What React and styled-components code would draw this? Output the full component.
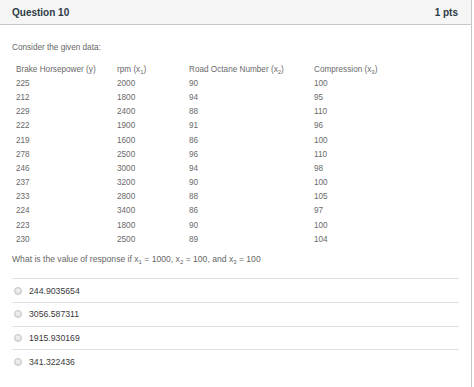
import styled, { createGlobalStyle } from "styled-components";

const GlobalStyle = createGlobalStyle`
  html, body {
    margin: 0;
    padding: 0;
    background: #fff;
  }
  body {
    font-family: "Liberation Sans", Arial, sans-serif;
  }
`;

const Card = styled.div`
  width: 472px;
  height: 387px;
  box-sizing: border-box;
  border-right: 1px solid #c6c6c6;
  display: flex;
  flex-direction: column;
`;

const Header = styled.div`
  height: 24px;
  display: flex;
  align-items: center;
  justify-content: space-between;
  padding: 0 13px 0 12px;
  background: #f5f5f5;
  border-bottom: 1px solid #c8c8c8;
  color: #2d3b45;
  font-size: 10px;
  font-weight: bold;
`;

const Body = styled.div`
  padding: 17px 12px 0 12px;
  color: #666;
  font-size: 8.2px;
`;

const Line = styled.div`
  line-height: 12px;
  height: 12px;
  white-space: nowrap;
`;

const DataTable = styled.div`
  margin-top: 8px;
  padding-left: 4px;
  display: grid;
  grid-template-columns: 101px 72px 125px auto;
  grid-auto-rows: 14.2px;
  align-items: center;
  color: #6a6a6a;
`;

const Cell = styled.div`
  white-space: nowrap;
`;

const Sub = styled.sub`
  font-size: 6px;
  vertical-align: -2px;
  line-height: 0;
`;

const Prompt = styled(Line)`
  margin-top: 7px;
  margin-bottom: 13px;
  font-size: 8.6px;
`;

const Options = styled.div`
  display: flex;
  flex-direction: column;
`;

const Option = styled.label`
  height: 22.67px;
  box-sizing: content-box;
  display: flex;
  align-items: center;
  gap: 7px;
  padding: 0 0 1px 2px;
  margin-top: -1px;
  border-top: 1px solid #e0e0e0;
  color: #3a3a3a;
  font-size: 8.7px;

  &:first-child {
    margin-top: 0;
  }
`;

const Radio = styled.span`
  width: 6px;
  height: 6px;
  border-radius: 50%;
  border: 0.5px solid #c4c4c4;
  background: radial-gradient(circle at 50% 35%, #f4f4f4, #d6d6d6);
`;

const rows = [
  [225, 2000, 90, 100],
  [212, 1800, 94, 95],
  [229, 2400, 88, 110],
  [222, 1900, 91, 96],
  [219, 1600, 86, 100],
  [278, 2500, 96, 110],
  [246, 3000, 94, 98],
  [237, 3200, 90, 100],
  [233, 2800, 88, 105],
  [224, 3400, 86, 97],
  [223, 1800, 90, 100],
  [230, 2500, 89, 104],
];

const answers = ["244.9035654", "3056.587311", "1915.930169", "341.322436"];

export default function App() {
  return (
    <>
      <GlobalStyle />
      <Card>
        <Header>
          <span>Question 10</span>
          <span>1 pts</span>
        </Header>
        <Body>
          <Line>Consider the given data:</Line>
          <DataTable>
            <Cell>Brake Horsepower (y)</Cell>
            <Cell>
              rpm (x<Sub>1</Sub>)
            </Cell>
            <Cell>
              Road Octane Number (x<Sub>2</Sub>)
            </Cell>
            <Cell>
              Compression (x<Sub>3</Sub>)
            </Cell>
            {rows.map((row, i) =>
              row.map((v, j) => <Cell key={`${i}-${j}`}>{v}</Cell>)
            )}
          </DataTable>
          <Prompt>
            What is the value of response if x<Sub>1</Sub> = 1000, x<Sub>2</Sub> = 100, and x
            <Sub>3</Sub> = 100
          </Prompt>
          <Options>
            {answers.map((a) => (
              <Option key={a}>
                <Radio />
                {a}
              </Option>
            ))}
          </Options>
        </Body>
      </Card>
    </>
  );
}
